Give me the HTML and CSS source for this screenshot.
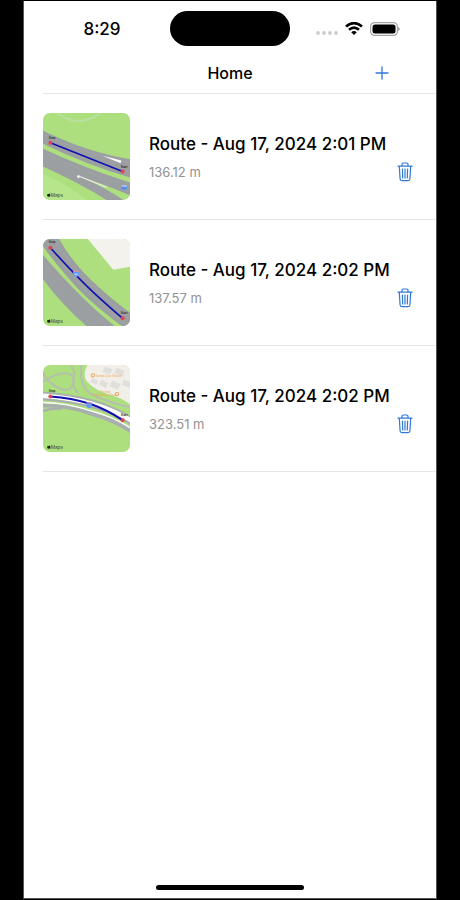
FILE: index.html
```html
<!DOCTYPE html>
<html lang="en">
<head>
  <meta charset="UTF-8">
  <meta name="viewport" content="width=device-width, initial-scale=1.0">
  <title>Home</title>
  <link rel="stylesheet" href="styles.css">
</head>
<body>
  <div class="phone">
    <header class="status-bar">
      <div class="clock">8:29</div>
      <div class="island"></div>
      <div class="status-icons">
        <svg class="signal" viewBox="0 0 22 4" fill="#cdcdcd">
          <circle cx="2" cy="2" r="1.900"/><circle cx="8" cy="2" r="1.900"/><circle cx="14" cy="2" r="1.900"/><circle cx="20" cy="2" r="1.900"/>
        </svg>
        <svg class="wifi" viewBox="0 0 18 13">
          <path d="M1 4.600Q9-2.400 17 4.600M4 7.800Q9 3.400 14 7.800" fill="none" stroke="#000" stroke-width="2.600"/>
          <path d="M6.200 10.200Q9 8 11.800 10.200L9 13z"/>
        </svg>
        <svg class="battery" viewBox="0 0 30 14">
          <rect x=".6" y=".6" width="26.800" height="12.800" rx="4" fill="none" stroke="#a4a4a4" stroke-width="1.200"/>
          <rect x="2.500" y="2.500" width="23" height="9" rx="2.500"/>
          <path d="M28.200 5q1.600.5 1.600 2t-1.600 2z" fill="#999"/>
        </svg>
      </div>
    </header>

    <nav class="nav-bar">
      <h1>Home</h1>
      <button class="add" aria-label="Add route">
        <svg viewBox="0 0 14 14"><path d="M7 1v12M1 7h12" stroke="currentColor" stroke-width="1.300" stroke-linecap="round"/></svg>
      </button>
    </nav>

    <main>
      <ul class="routes">
        <li class="route">
          <svg class="map" viewBox="0 0 260 260">
            <rect width="260" height="260" fill="#addf7f"/>
            <path d="M0 182Q70 210 130 260H0z" fill="#b6e58b"/>
            <path d="M42 0Q105 48 172 0" fill="none" stroke="#bcdfa3" stroke-width="5"/>
            <path d="M0 53Q135 118 260 138V193Q130 155 0 92z" fill="#9b9fa1"/>
            <path d="M0 107Q125 165 260 208V246Q160 205 118 193 190 226 240 260H190Q110 210 0 160z" fill="#9b9fa1"/>
            <path d="M0 64Q130 123 260 149M0 82Q130 143 260 180M0 119Q125 178 260 222" fill="none" stroke="#a3a7a9" stroke-width="2"/>
            <path d="M178 128L234 142 232 150z" fill="#fff"/>
            <circle cx="106" cy="190" r="4" fill="#fff"/>
            <path d="M108 189L190 222" stroke="#e9f1e5" stroke-width="3"/>
            <path d="M233 218l10-2 9 2v7q-3 5-9 6-8-1-10-6z" fill="#5b8fe8"/>
            <path d="M235 218h16" stroke="#dce5f8" stroke-width="3"/>
            <path d="M22 89L238 175" stroke="#1010b0" stroke-width="5"/>
            <circle cx="22" cy="89" r="6" fill="#e3434c"/>
            <circle cx="238" cy="175" r="6" fill="#e3434c"/>
            <text x="17" y="77" class="map-label">Stop</text>
            <text x="232" y="164" class="map-label">Start</text>
            <path d="M18 242q2-1 4 .5-2 2 .5 4.500-1.500 4-4 3-1-.5-2 0-2.500.8-4-3-1-4 2-5 1.500-.3 3.500 0zM17.500 241q0-2 2.500-3 0 2.500-2.500 3z" fill="#222"/>
            <text x="23" y="250" class="map-logo">Maps</text>
          </svg>
          <div class="details">
            <h2>Route - Aug 17, 2024 2:01 PM</h2>
            <p>136.12 m</p>
          </div>
          <button class="delete" aria-label="Delete route">
            <svg viewBox="0 0 16 20"><path d="M1 4.200h14M5 4V2.300Q5 1 6.300 1h3.400Q11 1 11 2.300V4M2.300 4.500l.8 12.500Q3.200 18.600 5 18.600h6q1.800 0 1.900-1.600l.8-12.500M5.400 7l.3 9M8 7v9M10.600 7l-.3 9"/></svg>
          </button>
        </li>

        <li class="route">
          <svg class="map" viewBox="0 0 260 260">
            <rect width="260" height="260" fill="#addf7f"/>
            <path d="M134 0L210 92 260 83V0z" fill="#f4f2ec"/>
            <path d="M0 0H48Q95 82 168 145 215 188 260 220V260H235Q125 178 72 112 28 62 0 22z" fill="#9b9fa1"/>
            <path d="M0 48Q52 108 98 155 160 218 214 260H130Q60 200 0 120z" fill="#9b9fa1"/>
            <path d="M35 0Q80 80 150 143 205 195 260 237M5 6Q55 75 110 134 170 197 248 255M0 66Q60 140 105 183 150 226 190 260M0 100Q60 180 150 260" fill="none" stroke="#a3a7a9" stroke-width="2"/>
            <path d="M22 26Q90 102 145 154 180 187 238 237" fill="none" stroke="#1010b0" stroke-width="5"/>
            <path d="M90 98h18v9q-4 6-9 7-7-2-9-7z" fill="#659bf4"/>
            <path d="M91 97h16" stroke="#db8c9c" stroke-width="3"/>
            <path d="M94 105h10" stroke="#d5e1fa" stroke-width="3"/>
            <circle cx="22" cy="26" r="6" fill="#e3434c"/>
            <circle cx="238" cy="237" r="6" fill="#e3434c"/>
            <text x="17" y="13" class="map-label">Stop</text>
            <text x="232" y="224" class="map-label">Start</text>
            <path d="M18 242q2-1 4 .5-2 2 .5 4.500-1.500 4-4 3-1-.5-2 0-2.500.8-4-3-1-4 2-5 1.500-.3 3.500 0zM17.500 241q0-2 2.500-3 0 2.500-2.500 3z" fill="#222"/>
            <text x="23" y="250" class="map-logo">Maps</text>
          </svg>
          <div class="details">
            <h2>Route - Aug 17, 2024 2:02 PM</h2>
            <p>137.57 m</p>
          </div>
          <button class="delete" aria-label="Delete route">
            <svg viewBox="0 0 16 20"><path d="M1 4.200h14M5 4V2.300Q5 1 6.300 1h3.400Q11 1 11 2.300V4M2.300 4.500l.8 12.500Q3.200 18.600 5 18.600h6q1.800 0 1.900-1.600l.8-12.500M5.400 7l.3 9M8 7v9M10.600 7l-.3 9"/></svg>
          </button>
        </li>

        <li class="route">
          <svg class="map" viewBox="0 0 260 260">
            <rect width="260" height="260" fill="#addf7f"/>
            <path d="M132 0Q118 30 130 48 155 78 210 92 240 101 260 118V0z" fill="#f2efe9"/>
            <path d="M185 5l24 8-8 15-23-7zM220 8l24 9-7 16-24-9zM147 38l18 8-6 14-18-10zM174 44l21 10-7 15-21-10zM207 46l25 11-8 17-25-11zM241 43l19 8v17l-24-9z" fill="#e0dfdc"/>
            <path d="M0 50Q55 15 82 28 104 43 80 72 64 80 38 64 8 45 0 22M82 0Q98 21 92 38 84 62 106 85" fill="none" stroke="#b4c1a8" stroke-width="6"/>
            <path d="M114 0Q108 62 140 84T260 126" fill="none" stroke="#b7c0b0" stroke-width="6"/>
            <!-- carriageways, top to bottom -->
            <path d="M0 82Q80 87 150 107 210 124 264 157" fill="none" stroke="#a9aeae" stroke-width="6"/>
            <path d="M0 92Q80 97 150 117 210 134 264 167" fill="none" stroke="#fbfbfb" stroke-width="14"/>
            <path d="M0 102Q80 107 150 127 210 144 264 177" fill="none" stroke="#a9aeae" stroke-width="6"/>
            <path d="M0 112Q75 114 145 138 210 156 264 190" fill="none" stroke="#fbfbfb" stroke-width="5"/>
            <path d="M0 121Q75 121 145 146 210 163 264 199" fill="none" stroke="#a9aeae" stroke-width="11"/>
            <path d="M0 137Q25 129 55 131" fill="none" stroke="#a9aeae" stroke-width="7"/>
            <path d="M22 94Q85 98 140 116 190 133 238 165" fill="none" stroke="#1010b0" stroke-width="6"/>
            <path d="M129 114h17v9q-3 5-8 6-7-1-9-6z" fill="#659bf4"/>
            <path d="M130 113h15" stroke="#db8c9c" stroke-width="3"/>
            <circle cx="22" cy="94" r="6" fill="#e3434c"/>
            <circle cx="238" cy="165" r="6" fill="#e3434c"/>
            <text x="17" y="82" class="map-label">Stop</text>
            <text x="232" y="152" class="map-label">Start</text>
            <g fill="none" stroke="#eda656" stroke-width="3">
              <circle cx="149" cy="31" r="5"/><circle cx="221" cy="87" r="5"/>
            </g>
            <text x="158" y="35" class="map-place">Santa Cruz Station</text>
            <text x="172" y="84" class="map-place">Animal</text>
            <text x="147" y="93" class="map-place">Emergency Clinic</text>
            <path d="M18 242q2-1 4 .5-2 2 .5 4.500-1.500 4-4 3-1-.5-2 0-2.500.8-4-3-1-4 2-5 1.500-.3 3.500 0zM17.500 241q0-2 2.500-3 0 2.500-2.500 3z" fill="#222"/>
            <text x="23" y="250" class="map-logo">Maps</text>
          </svg>
          <div class="details">
            <h2>Route - Aug 17, 2024 2:02 PM</h2>
            <p>323.51 m</p>
          </div>
          <button class="delete" aria-label="Delete route">
            <svg viewBox="0 0 16 20"><path d="M1 4.200h14M5 4V2.300Q5 1 6.300 1h3.400Q11 1 11 2.300V4M2.300 4.500l.8 12.500Q3.200 18.600 5 18.600h6q1.800 0 1.900-1.600l.8-12.500M5.400 7l.3 9M8 7v9M10.600 7l-.3 9"/></svg>
          </button>
        </li>
      </ul>
    </main>

    <div class="home-indicator"></div>
  </div>
</body>
</html>
```
FILE: styles.css
```css
:root {
  --blue: #2f78d8;
  --line: #e6e6e6;
}

* {
  box-sizing: border-box;
}

body {
  margin: 0;
  padding: 1px 5%;
  min-height: 100vh;
  display: flex;
  background-color: #000;
  color: #000;
  font-family: Inter, "Liberation Sans", sans-serif;
}

h1, h2, p, ul {
  margin: 0;
  padding: 0;
}

svg {
  display: block;
}

button {
  padding: 0;
  border: none;
  background: none;
  color: var(--blue);
  cursor: pointer;
}

.phone {
  flex: 1;
  display: flex;
  flex-direction: column;
  background-color: #fff;
  border: 1px solid #555;
  border-top: none;
}

/* status bar */
.status-bar {
  display: grid;
  grid-template-columns: 1fr 120px 1fr;
  align-items: center;
  height: 55px;
}

.clock {
  padding-left: 10px;
  text-align: center;
  font-size: 17px;
  font-weight: 500;
}

.island {
  height: 35px;
  border-radius: 18px;
  background-color: #000;
}

.status-icons {
  display: flex;
  align-items: center;
  justify-content: flex-end;
  gap: 7px;
  padding-right: 36px;
}

.signal {
  width: 22px;
  height: 4px;
  margin-top: 8px;
}

.wifi {
  width: 18px;
  height: 13px;
}

.battery {
  width: 30px;
  height: 14px;
}

/* title */
.nav-bar {
  display: grid;
  grid-template-columns: 1fr auto 1fr;
  align-items: center;
  height: 38px;
  margin-left: 19px;
  padding: 0 19px 3px 0;
  border-bottom: 1px solid var(--line);
}

.nav-bar h1 {
  grid-column: 2;
  font-size: 16px;
  font-weight: 500;
}

.add {
  justify-self: end;
  margin-right: 28px;
}

.add svg {
  width: 14px;
  height: 14px;
}

/* list */
.routes {
  margin-left: 19px;
  list-style: none;
}

.route {
  display: flex;
  padding: 19px 23px 19px 0;
  border-bottom: 1px solid var(--line);
}

.map {
  flex: none;
  width: 87px;
  height: 87px;
  border-radius: 7px;
}

.map-label {
  font-size: 9px;
  font-weight: 600;
  fill: #222;
}

.map-place {
  font-size: 9px;
  fill: #eda656;
}

.map-logo {
  font-size: 14px;
  fill: #444;
}

.details {
  flex: 1;
  padding: 20px 0 0 19px;
  white-space: nowrap;
}

.details h2 {
  font-size: 17px;
  font-weight: 500;
  line-height: 22px;
}

.details p {
  margin-top: 8px;
  color: #929292;
  font-size: 13px;
  line-height: 18px;
}

.delete {
  align-self: flex-end;
  margin-bottom: 18px;
}

.delete svg {
  width: 16px;
  height: 20px;
  fill: none;
  stroke: currentColor;
  stroke-width: 1.2;
  stroke-linecap: round;
}

.home-indicator {
  width: 148px;
  height: 5px;
  margin: auto auto 8px;
  border-radius: 3px;
  background-color: #000;
}
```
